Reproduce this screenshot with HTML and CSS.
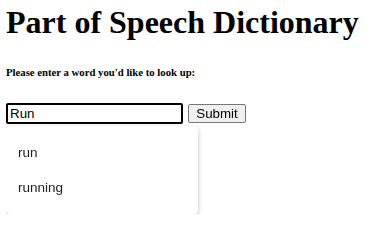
FILE: index.html
```html
<!DOCTYPE html>
<html lang="en">
<head>
    <meta charset="UTF-8">
    <title>Part of Speech Dictionary</title>
    <link rel="stylesheet" href="styles.css">
</head>
<body>
    <h1 class="title">Part of Speech Dictionary</h1>
    <h6 class="prompt">Please enter a word you'd like to look up:</h6>

    <form class="search">
        <div class="search-field">
            <input type="text" class="word-input" value="Run" autofocus>
            <ul class="suggestions">
                <li>run</li>
                <li>running</li>
            </ul>
        </div>
        <button type="submit" class="submit-btn">Submit</button>
    </form>
</body>
</html>
```

FILE: styles.css
```css
body {
    font-family: "Liberation Serif", "Times New Roman", serif;
    margin: 4px 6px 0;
    color: #000;
    background: #fff;
}
.title {
    font-size: 32px;
    margin: 0 0 25px;
}
.prompt {
    font-size: 10.72px;
    margin: 0 0 25px;
}
.search {
    display: flex;
    align-items: flex-start;
    gap: 5px;
}
.search-field {
    display: flex;
    flex-direction: column;
    gap: 2px;
    width: 177px;
}
.word-input {
    width: 177px;
    height: 21px;
    box-sizing: border-box;
    padding: 1px 2px;
    font-family: "Liberation Sans", Arial, sans-serif;
    font-size: 13.33px;
    border: 2px solid #000;
    border-radius: 2px;
    outline: none;
}
.suggestions {
    width: 192px;
    margin: 0;
    padding: 9px 0;
    list-style: none;
    background: #fff;
    border-radius: 4px;
    box-shadow: 0 2px 5px rgba(0,0,0,0.25), 0 0 1px rgba(0,0,0,0.15);
    font-family: "Liberation Sans", Arial, sans-serif;
    font-size: 13.5px;
    line-height: 15px;
    color: #212121;
}
.suggestions li {
    padding: 10px 12px;
}
.submit-btn {
    font-family: "Liberation Sans", Arial, sans-serif;
    font-size: 13.33px;
    width: 58px;
    height: 19px;
    margin-top: 1px;
    padding: 0;
    background: #efefef;
    border: 1px solid #767676;
    border-radius: 2px;
}
```
